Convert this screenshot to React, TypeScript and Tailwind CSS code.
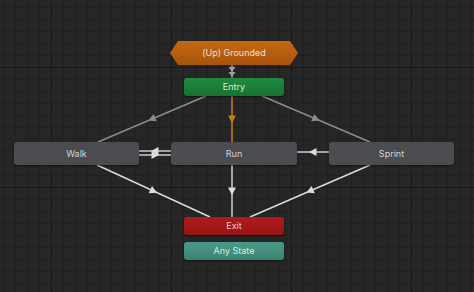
type Edge = { x1: number; y1: number; x2: number; y2: number; color: string; w?: number; at?: number };

const edges: Edge[] = [
  // entry -> walk / sprint (dim)
  { x1: 206, y1: 96, x2: 98, y2: 142, color: "#8c8c8c" },
  { x1: 262, y1: 96, x2: 370, y2: 142, color: "#8c8c8c" },
  // entry -> run (default)
  { x1: 232, y1: 96, x2: 232, y2: 142, color: "#c47a1e", w: 1.6 },
  // walk <-> run
  { x1: 171, y1: 151, x2: 139, y2: 151, color: "#dcdcdc", at: 0.5 },
  { x1: 139, y1: 155, x2: 171, y2: 155, color: "#dcdcdc", at: 0.5 },
  // sprint -> run
  { x1: 329, y1: 152, x2: 297, y2: 152, color: "#dcdcdc" },
  // run / walk / sprint -> exit
  { x1: 232, y1: 165, x2: 232, y2: 217, color: "#dcdcdc" },
  { x1: 97, y1: 165, x2: 210, y2: 217, color: "#dcdcdc" },
  { x1: 370, y1: 165, x2: 250, y2: 217, color: "#dcdcdc" },
];

function Arrow({ e }: { e: Edge }) {
  const t = e.at ?? 0.5;
  const mx = e.x1 + (e.x2 - e.x1) * t;
  const my = e.y1 + (e.y2 - e.y1) * t;
  const ang = (Math.atan2(e.y2 - e.y1, e.x2 - e.x1) * 180) / Math.PI;
  return (
    <g>
      <line x1={e.x1} y1={e.y1} x2={e.x2} y2={e.y2} stroke={e.color} strokeWidth={e.w ?? 1.4} />
      <polygon points="4,0 -3.5,-4 -3.5,4" fill={e.color} transform={`translate(${mx} ${my}) rotate(${ang})`} />
    </g>
  );
}

function Node({ label, className }: { label: string; className: string }) {
  return (
    <div
      className={`absolute flex items-center justify-center rounded-[3px] text-[9px] text-[#d4d4d4] shadow-[0_1px_2px_rgba(0,0,0,0.5)] ${className}`}
    >
      {label}
    </div>
  );
}

export default function App() {
  return (
    <div
      className="relative h-[292px] w-[474px] overflow-hidden bg-[#262626] font-['Inter','Liberation_Sans',sans-serif]"
    >
      {/* grid */}
      <div className="absolute inset-0 bg-[linear-gradient(to_right,#202020_1px,transparent_1px),linear-gradient(to_bottom,#202020_1px,transparent_1px)] bg-[size:12px_12px] bg-[position:3px_7px]" />
      <div className="absolute inset-0 bg-[linear-gradient(to_right,#191919_1px,transparent_1px),linear-gradient(to_bottom,#191919_1px,transparent_1px)] bg-[size:120px_120px] bg-[position:51px_67px]" />

      <svg className="absolute inset-0" width={474} height={292}>
        {/* grounded -> entry */}
        <line x1={232} y1={65} x2={232} y2={78} stroke="#9a9a9a" strokeWidth={1.4} />
        <polygon points="228.5,67 235.5,67 232,72" fill="#a0a0a0" />
        <polygon points="228.5,72 235.5,72 232,77" fill="#a0a0a0" />
        {edges.map((e, i) => (
          <Arrow key={i} e={e} />
        ))}
      </svg>

      {/* (Up) Grounded */}
      <div className="absolute left-[170px] top-[41px] flex h-[24px] w-[128px] items-center justify-center bg-[linear-gradient(#c56a14,#a8520c)] text-[9px] text-[#f0e0cc] [clip-path:polygon(8px_0,120px_0,100%_50%,120px_100%,8px_100%,0_50%)]">
        (Up) Grounded
      </div>

      <Node label="Entry" className="left-[184px] top-[78px] h-[18px] w-[100px] bg-[linear-gradient(#1f8a3e,#177232)] text-[#d6ecd9]" />
      <Node label="Walk" className="left-[14px] top-[142px] h-[23px] w-[125px] bg-[#4a4c50]" />
      <Node label="Run" className="left-[171px] top-[142px] h-[23px] w-[126px] bg-[#4a4c50]" />
      <Node label="Sprint" className="left-[329px] top-[142px] h-[23px] w-[125px] bg-[#4a4c50]" />
      <Node label="Exit" className="left-[184px] top-[217px] h-[18px] w-[100px] bg-[linear-gradient(#b01c1c,#951414)] text-[#efcccc]" />
      <Node label="Any State" className="left-[184px] top-[242px] h-[18px] w-[100px] bg-[linear-gradient(#4a9a88,#3b8272)] text-[#d8eee8]" />
    </div>
  );
}
